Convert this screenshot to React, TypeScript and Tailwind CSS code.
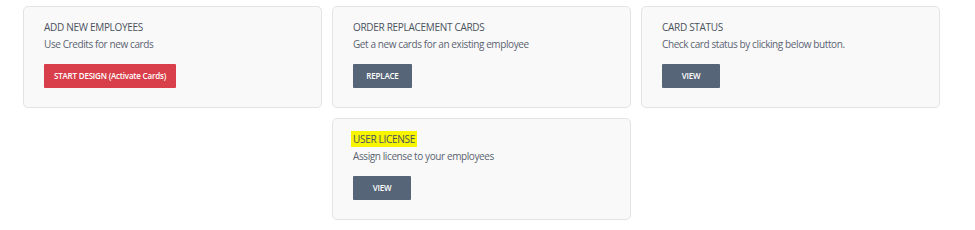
import React from "react";

function Card({
  title,
  desc,
  btn,
  btnClass,
  highlight,
}: {
  title: string;
  desc: string;
  btn: string;
  btnClass: string;
  highlight?: boolean;
}) {
  return (
    <div className="h-[102px] rounded-[5px] border border-[#e3e3e3] bg-[#f9f9f9] pl-[20px] pt-[12px]">
      <div className="h-[16px] text-[10px] leading-[16px] text-[#4a5260] tracking-[-0.3px]">
        <span className={highlight ? "bg-[#f7f500] py-[1px] px-[2px] -mx-[2px]" : ""}>{title}</span>
      </div>
      <div className="mt-[1px] h-[16px] text-[10px] leading-[16px] text-[#5b6371] tracking-[-0.4px]">{desc}</div>
      <button
        className={`mt-[12px] block h-[24px] rounded-[1px] text-[8px] font-semibold tracking-[-0.2px] text-white ${btnClass}`}
      >
        {btn}
      </button>
    </div>
  );
}

export default function App() {
  return (
    <div
      className="h-[230px] w-[975px] bg-white pl-[23px] pt-[6px]"
      style={{ fontFamily: '"Open Sans", "Noto Sans", sans-serif' }}
    >
      <div className="grid grid-cols-[299px_299px_299px] gap-x-[10px] gap-y-[10px]">
        <Card
          title="ADD NEW EMPLOYEES"
          desc="Use Credits for new cards"
          btn="START DESIGN (Activate Cards)"
          btnClass="w-[132px] bg-[#d83f4a]"
        />
        <Card
          title="ORDER REPLACEMENT CARDS"
          desc="Get a new cards for an existing employee"
          btn="REPLACE"
          btnClass="w-[59px] bg-[#566577]"
        />
        <Card
          title="CARD STATUS"
          desc="Check card status by clicking below button."
          btn="VIEW"
          btnClass="w-[58px] bg-[#566577]"
        />
        <div />
        <Card
          title="USER LICENSE"
          desc="Assign license to your employees"
          btn="VIEW"
          btnClass="w-[58px] bg-[#566577]"
          highlight
        />
      </div>
    </div>
  );
}
